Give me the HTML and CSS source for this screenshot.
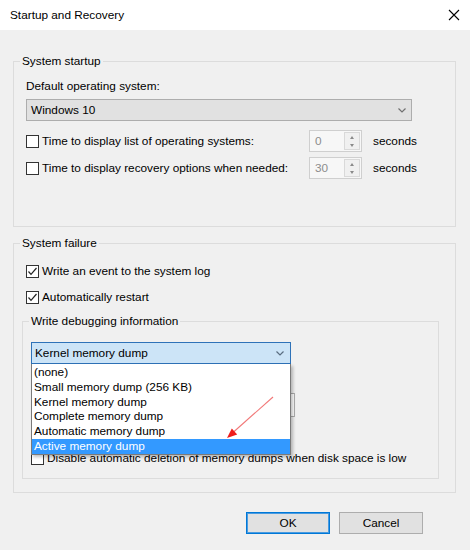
FILE: index.html
```html
<!DOCTYPE html>
<html lang="en">
<head>
<meta charset="utf-8">
<title>Startup and Recovery</title>
<link rel="stylesheet" href="styles.css">
</head>
<body>
<div class="titlebar">
  <span class="title">Startup and Recovery</span>
  <svg class="close" width="12" height="12" viewBox="0 0 12 12"><path d="M1 1 L11 11 M11 1 L1 11" stroke="#000" stroke-width="1.1" fill="none"/></svg>
</div>
<div class="client">
  <fieldset class="group startup">
    <legend>System startup</legend>
    <div class="label">Default operating system:</div>
    <div class="select">
      <span>Windows 10</span>
      <svg class="chev" width="8" height="5" viewBox="0 0 8 5"><polyline points="0.5,0.5 4,4 7.5,0.5" stroke="#707070" stroke-width="1.2" fill="none"/></svg>
    </div>
    <div class="row timer">
      <span class="check"></span>
      <span class="rowlabel">Time to display list of operating systems:</span>
      <div class="spin"><span class="val">0</span><span class="arrows"><i class="up"></i><i class="down"></i></span></div>
      <span class="unit">seconds</span>
    </div>
    <div class="row timer">
      <span class="check"></span>
      <span class="rowlabel">Time to display recovery options when needed:</span>
      <div class="spin"><span class="val">30</span><span class="arrows"><i class="up"></i><i class="down"></i></span></div>
      <span class="unit">seconds</span>
    </div>
  </fieldset>

  <fieldset class="group failure">
    <legend>System failure</legend>
    <div class="row crow">
      <span class="check"><svg width="11" height="11" viewBox="0 0 11 11"><polyline points="1.5,5.5 4,8.3 9.5,2" stroke="#222" stroke-width="1.2" fill="none"/></svg></span>
      <span>Write an event to the system log</span>
    </div>
    <div class="row crow">
      <span class="check"><svg width="11" height="11" viewBox="0 0 11 11"><polyline points="1.5,5.5 4,8.3 9.5,2" stroke="#222" stroke-width="1.2" fill="none"/></svg></span>
      <span>Automatically restart</span>
    </div>
    <fieldset class="group debug">
      <legend>Write debugging information</legend>
      <div class="combo-wrap">
        <div class="combo">
          <span>Kernel memory dump</span>
          <svg class="chev" width="8" height="5" viewBox="0 0 8 5"><polyline points="0.5,0.5 4,4 7.5,0.5" stroke="#5a6d80" stroke-width="1.2" fill="none"/></svg>
        </div>
        <ul class="dropdown">
          <li>(none)</li>
          <li>Small memory dump (256 KB)</li>
          <li>Kernel memory dump</li>
          <li>Complete memory dump</li>
          <li>Automatic memory dump</li>
          <li class="sel">Active memory dump</li>
        </ul>
      </div>
      <div class="dumpbox"></div>
      <div class="row disable">
        <span class="check"></span>
        <span>Disable automatic deletion of memory dumps when disk space is low</span>
      </div>
    </fieldset>
  </fieldset>

  <div class="buttons">
    <button class="btn default">OK</button>
    <button class="btn">Cancel</button>
  </div>
</div>
<svg class="annot" width="470" height="550" viewBox="0 0 470 550">
  <line x1="273" y1="397" x2="233" y2="432.5" stroke="#ee5555" stroke-width="1.1" stroke-opacity="0.8"/>
  <polygon points="227,438 231.8,428.4 237.2,434.4" fill="#ee1c1c"/>
</svg>
</body>
</html>
```
FILE: styles.css
```css
* { box-sizing: border-box; }
html, body { margin: 0; padding: 0; }
body {
  width: 470px;
  height: 550px;
  background: #f0f0f0;
  font-family: "Liberation Sans", Arial, sans-serif;
  font-size: 11.8px;
  color: #000;
  position: relative;
  overflow: hidden;
}
.titlebar {
  height: 30px;
  background: #fff;
  display: flex;
  align-items: center;
  justify-content: space-between;
  padding: 0 10px 0 10px;
}
.close { display: block; }
.client { padding: 0 14px 0 13px; }

.group {
  margin: 0;
  border: 1px solid #dcdcdc;
  min-width: 0;
}
legend {
  padding: 0 2px;
  line-height: 16px;
  height: 16px;
}
.group.startup { margin-top: 23px; padding: 9px 12px 47px 12px; }
.startup legend { margin-left: -6px; }
.label { line-height: 16px; height: 16px; }

.select {
  margin-top: 5px;
  width: 386px;
  height: 22px;
  background: #e1e1e1;
  border: 1px solid #adadad;
  display: flex;
  align-items: center;
  justify-content: space-between;
  padding: 0 5px 0 4px;
}
.chev { display: block; }

.row { display: flex; align-items: center; }
.timer { height: 22px; margin-top: 9px; }
.timer + .timer { margin-top: 5px; }
.check {
  width: 13px;
  height: 13px;
  border: 1px solid #333;
  background: #fff;
  flex: none;
  margin-right: 3px;
  display: flex;
}
.check svg { display: block; }
.rowlabel { width: 267px; flex: none; }
.spin {
  width: 53px;
  height: 22px;
  border: 1px solid #cfcfcf;
  background: #f7f7f7;
  display: flex;
  flex: none;
}
.spin .val { flex: 1; color: #8d8d8d; padding-left: 5px; line-height: 20px; }
.spin .arrows {
  width: 16px;
  display: flex;
  flex-direction: column;
  margin: 1px 1px 1px 0;
  background: #f0f0f0;
  border: 1px solid #d9d9d9;
}
.spin .arrows i {
  flex: 1;
  display: flex;
  align-items: center;
  justify-content: center;
}
.spin .arrows i::before {
  content: "";
  width: 0;
  height: 0;
  border-left: 2.5px solid transparent;
  border-right: 2.5px solid transparent;
}
.spin .arrows i.up::before { border-bottom: 3px solid #8a8a8a; }
.spin .arrows i.down::before { border-top: 3px solid #8a8a8a; }
.unit { margin-left: 11px; }

.group.failure { margin-top: 8px; padding: 12px 16px 13px 8px; }
.failure legend { margin-left: -2px; }
.crow { height: 16px; padding-left: 4px; }
.crow + .crow { margin-top: 10px; }

.group.debug { margin-top: 8px; padding: 13px 8px 12px 8px; }
.debug legend { margin-left: -2px; }
.combo-wrap { position: relative; width: 260px; }
.combo {
  height: 22px;
  background: #cce4f7;
  border: 1px solid #2e72b8;
  display: flex;
  align-items: center;
  justify-content: space-between;
  padding: 0 6px 0 3px;
}
.dropdown {
  position: absolute;
  left: 0;
  top: 22px;
  width: 260px;
  margin: 0;
  padding: 1px 0 0 0;
  list-style: none;
  background: #fff;
  border: 1px solid #7a7a7a;
  border-top: none;
  box-shadow: 2px 2px 3px rgba(0, 0, 0, 0.25);
  z-index: 2;
}
.dropdown li {
  height: 14.8px;
  line-height: 14.8px;
  padding-left: 2px;
  white-space: nowrap;
}
.dropdown li.sel { background: #3399ff; color: #fff; }
.dumpbox {
  margin-top: 29px;
  width: 264px;
  height: 24px;
  border: 1px solid #adadad;
  background: #fff;
}
.disable { height: 16px; margin-top: 33px; }

.buttons {
  margin-top: 19px;
  display: flex;
  justify-content: flex-end;
  gap: 9px;
  padding-right: 33px;
}
.btn {
  width: 84px;
  height: 22px;
  background: #e1e1e1;
  border: 1px solid #adadad;
  font-family: inherit;
  font-size: 11.8px;
  color: #000;
  padding: 0;
  margin: 0;
}
.btn.default {
  border: 1px solid #0078d7;
  box-shadow: inset 0 0 0 1px #4a9be0;
}
.annot {
  position: absolute;
  left: 0;
  top: 0;
  pointer-events: none;
  z-index: 5;
}
```
